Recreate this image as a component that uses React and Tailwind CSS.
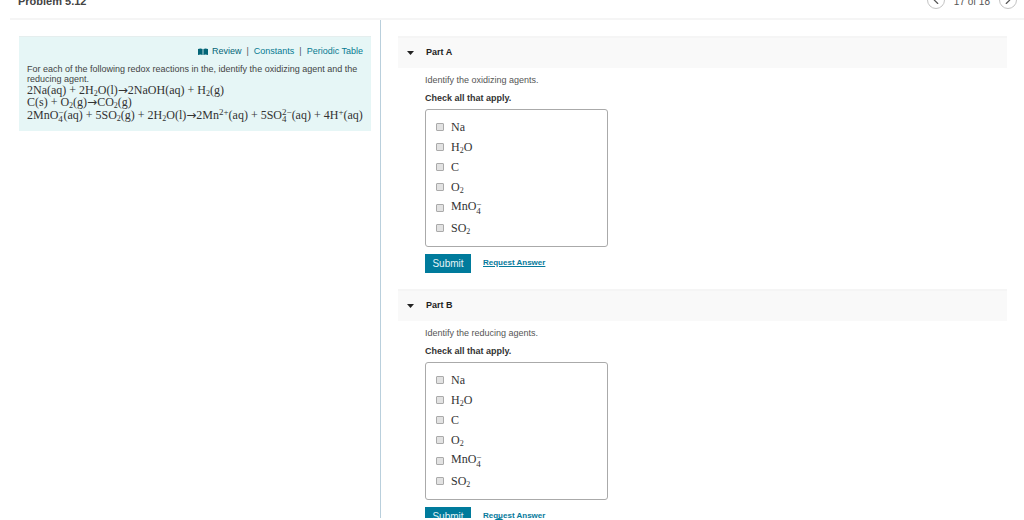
import React from "react";
import { ChevronLeft, ChevronRight } from "lucide-react";

const parts = [
  { id: "A", prompt: "Identify the oxidizing agents." },
  { id: "B", prompt: "Identify the reducing agents." },
];

function Charge({ sup, sub }) {
  return (
    <span className="inline-flex flex-col align-middle text-[9px] leading-[7px]">
      <span>{sup}</span>
      <span>{sub}</span>
    </span>
  );
}

function Sub({ children }) {
  return <sub className="text-[8px] leading-none">{children}</sub>;
}

function Sup({ children }) {
  return <sup className="text-[9px] leading-none">{children}</sup>;
}

function Arrow() {
  return <span className="font-['DejaVu_Sans',sans-serif] leading-none">→</span>;
}

const species = [
  { id: "na", label: "Na" },
  { id: "h2o", label: <>H<Sub>2</Sub>O</> },
  { id: "c", label: "C" },
  { id: "o2", label: <>O<Sub>2</Sub></> },
  { id: "mno4", label: <>MnO<Charge sup="−" sub="4" /></>, row: "h-[21px]" },
  { id: "so2", label: <>SO<Sub>2</Sub></> },
];

function Header() {
  return (
    <header className="ml-2.5 flex h-5 shrink-0 items-start justify-between overflow-hidden border-b-2 border-[#f5f5f5] pl-2 pr-[7px]">
      <h1 className="-mt-2 text-[11px] leading-[18px] font-bold text-[#444]">Problem 5.12</h1>
      <nav className="-mt-[9px] flex items-start gap-[9px] text-[10px] leading-[18px] text-[#555]">
        <button aria-label="Previous item" className="flex size-[18px] items-center justify-center rounded-full border border-[#c4c4c4]">
          <ChevronLeft size={14} strokeWidth={2} />
        </button>
        <span className="pt-0.5">17 of 18</span>
        <button aria-label="Next item" className="flex size-[18px] items-center justify-center rounded-full border border-[#c4c4c4]">
          <ChevronRight size={14} strokeWidth={2} />
        </button>
      </nav>
    </header>
  );
}

function BookIcon() {
  return (
    <svg width="10" height="8" viewBox="0 0 10 8" fill="currentColor" className="mr-1">
      <path d="M0 1Q2.5 0 4.6 1V7Q2.5 6 0 7ZM5.4 1Q7.5 0 10 1V7Q7.5 6 5.4 7Z" />
    </svg>
  );
}

function Problem() {
  return (
    <section className="border-t border-[#e5eeee] bg-[#e6f6f6] px-2 pt-2 pb-2 text-[9px] text-[#444]">
      <div className="flex items-center justify-end leading-[13px] text-[#067a91]">
        <a href="#review" className="flex items-center text-[#046577]"><BookIcon />Review</a>
        <span className="px-[5px] text-[#555]">|</span>
        <a href="#constants">Constants</a>
        <span className="px-[5px] text-[#555]">|</span>
        <a href="#periodic-table">Periodic Table</a>
      </div>
      <p className="mt-1.5 leading-[10px]">
        For each of the following redox reactions in the, identify the oxidizing agent and the reducing agent.
      </p>
      <div className="font-['Liberation_Serif',serif] text-[12px] leading-3 whitespace-nowrap text-[#333]">
        <div>2Na(aq) + 2H<Sub>2</Sub>O(l)<Arrow />2NaOH(aq) + H<Sub>2</Sub>(g)</div>
        <div>C(s) + O<Sub>2</Sub>(g)<Arrow />CO<Sub>2</Sub>(g)</div>
        <div className="mt-px">
          2MnO<Charge sup="−" sub="4" />(aq) + 5SO<Sub>2</Sub>(g) + 2H<Sub>2</Sub>O(l)<Arrow />2Mn<Sup>2+</Sup>(aq) + 5SO
          <Charge sup="2−" sub="4" />(aq) + 4H<Sup>+</Sup>(aq)
        </div>
      </div>
    </section>
  );
}

function Part({ id, prompt }) {
  return (
    <section className="mb-4">
      <h2 className="flex h-8 items-center border-t-2 border-[#f5f5f5] bg-[#f9f9f9] pl-[9px] text-[9px] font-bold text-[#222]">
        <button className="flex items-center gap-3">
          <svg width="7" height="4" viewBox="0 0 7 4" fill="currentColor"><path d="M0 0H7L3.5 4Z" /></svg>
          Part {id}
        </button>
      </h2>
      <div className="pl-[27px] text-[9px] leading-3">
        <p className="mt-1.5 mb-1.5 text-[#555]">{prompt}</p>
        <fieldset>
          <legend className="font-bold text-[#333]">Check all that apply.</legend>
          <div className="mt-[5px] flex w-[183px] flex-col rounded-[3px] border border-[#aaa] px-2.5 pt-[7px] pb-2">
            {species.map((s) => (
              <label
                key={s.id}
                className={`flex items-center gap-[7px] font-['Liberation_Serif',serif] text-[12px] text-[#333] ${s.row || "h-5"}`}
              >
                <input type="checkbox" className="size-2 appearance-none rounded-[1px] border border-[#aaa] bg-[#e2e2e2] checked:bg-[#007fa3]" />
                <span>{s.label}</span>
              </label>
            ))}
          </div>
        </fieldset>
        <div className="mt-[7px] flex items-start gap-3">
          <button className="h-[19px] w-[46px] bg-[#007b9c] text-[10px] text-[#e4f3f7]">Submit</button>
          <a href="#answer" className="pt-[3px] text-[8px] font-bold text-[#067a9c] underline">Request Answer</a>
        </div>
      </div>
    </section>
  );
}

export default function App() {
  return (
    <div className="relative flex h-screen flex-col overflow-hidden bg-white pb-0.5 font-['Liberation_Sans',Arial,sans-serif]">
      <Header />
      <main className="flex min-h-0 flex-1">
        <aside className="w-[381px] shrink-0 border-r border-[#b9cfdc] pt-4 pr-[9px] pl-[19px]">
          <Problem />
        </aside>
        <div className="min-w-0 flex-1 overflow-hidden pt-4 pr-[17px] pl-[17px]">
          {parts.map((p) => (
            <Part key={p.id} {...p} />
          ))}
        </div>
      </main>
      {/* top edge of the collapsed drawer handle */}
      <span className="absolute -bottom-2.5 left-[493px] size-3 rounded-full bg-[#007b9c]" />
    </div>
  );
}
